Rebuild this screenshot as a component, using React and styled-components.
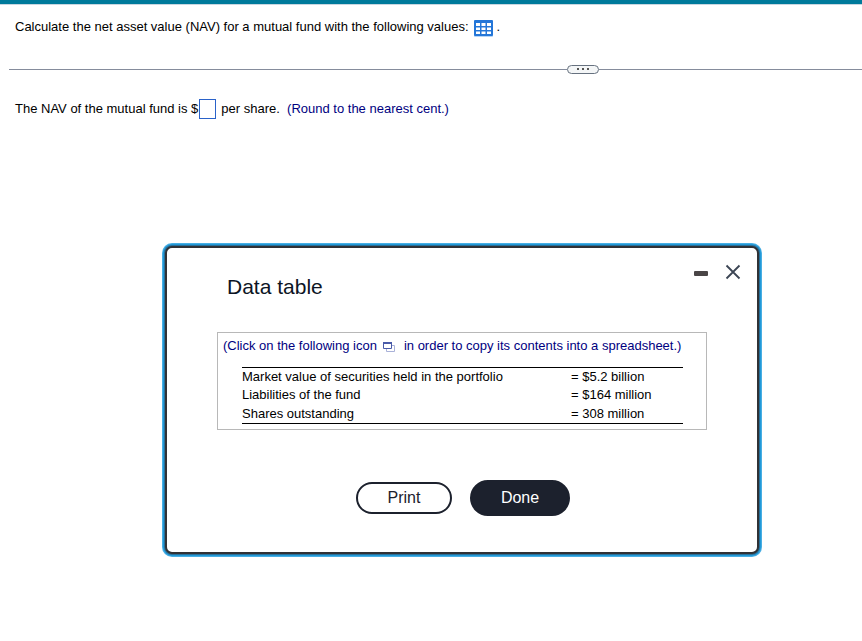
import React from "react";
import styled, { createGlobalStyle } from "styled-components";

const GlobalStyle = createGlobalStyle`
  *, *::before, *::after { box-sizing: border-box; }
  body {
    margin: 0;
    background: #fff;
    color: #000;
    font: 13px/18px "Liberation Sans", Arial, sans-serif;
  }
  button, input { font: inherit; }
`;

const Page = styled.main`
  position: relative;
  min-height: 100vh;
  border-top: 4px solid #007a9b;
`;

const Question = styled.section`
  display: flex;
  align-items: center;
  height: 44px;
  padding: 0 15px;
  border-top: 1px solid #c9d6e0;
  white-space: pre;
`;

const IconButton = styled.button`
  display: flex;
  align-items: center;
  justify-content: center;
  padding: 0;
  border: 0;
  background: none;
  color: #3c4554;
  cursor: pointer;
`;

const TableButton = styled(IconButton)`
  margin: 3px 4px 0 5px;
`;

const Divider = styled.div`
  display: grid;
  grid-template-columns: 558fr auto 263fr;
  align-items: center;
  height: 10px;
  margin: 16px 0 0 9px;
`;

const Rule = styled.span`
  height: 1px;
  background: #858c9c;
`;

const Handle = styled.button`
  display: flex;
  align-items: center;
  justify-content: center;
  gap: 3px;
  width: 32px;
  height: 9px;
  padding: 0;
  border: 1px solid #66717f;
  border-radius: 5px;
  background: #f4f6f7;
`;

const Dot = styled.span`
  width: 2px;
  height: 2px;
  background: #555;
`;

const Answer = styled.section`
  display: flex;
  align-items: center;
  height: 20px;
  margin-top: 25px;
  padding: 0 15px;
  white-space: pre;
`;

const AnswerInput = styled.input`
  width: 17px;
  height: 20px;
  margin: 0 5px 0 1px;
  padding: 0;
  border: 1px solid #2a62c9;
  outline: 0;
  background: #fff;
  text-align: center;
`;

const Hint = styled.span`
  color: #00007f;
`;

const Dialog = styled.section`
  position: absolute;
  top: 242px;
  left: 165px;
  right: 103px;
  min-width: 594px;
  padding: 0 50px 36px;
  border: 2px solid #303236;
  border-radius: 7px;
  background: #fff;
  box-shadow: 0 0 0 1px #286f98, 0 0 0 2px #2299d8, 0 0 0 3px #48aee3;
`;

const DialogHeader = styled.header`
  display: flex;
  justify-content: space-between;
  height: 84px;
  margin-right: -34px;
  padding-left: 10px;
`;

const Title = styled.h1`
  margin: 26px 0 0;
  color: #0c1424;
  font-size: 21px;
  line-height: 26px;
  font-weight: 400;
`;

const WindowActions = styled.div`
  display: flex;
  gap: 17px;
  height: 16px;
  margin-top: 16px;
`;

const DataPanel = styled.div`
  padding: 4px 23px 5px 24px;
  border: 1px solid #b8b8b8;
`;

const CopyNote = styled.p`
  display: flex;
  align-items: center;
  margin: 0 -19px;
  color: #00007f;
  white-space: pre;
`;

const CopyButton = styled(IconButton)`
  margin: 1px 9px 0 6px;
`;

const DataTable = styled.table`
  width: 100%;
  height: 57px;
  margin-top: 12px;
  border-collapse: separate;
  border-spacing: 0;
  border: solid #000;
  border-width: 1px 0;
`;

const Label = styled.th`
  padding: 0;
  font-weight: 400;
  text-align: left;
`;

const Value = styled.td`
  width: 112px;
  padding: 0;
`;

const Actions = styled.footer`
  display: flex;
  align-items: center;
  justify-content: center;
  gap: 18px;
  margin-top: 50px;
  padding-left: 2px;
`;

const PillButton = styled.button`
  width: ${(p) => (p.$primary ? 100 : 96)}px;
  height: ${(p) => (p.$primary ? 36 : 32)}px;
  padding: 0 0 1px;
  border: 2px solid #1c212d;
  border-radius: 18px;
  background: ${(p) => (p.$primary ? "#1c212d" : "#fff")};
  color: ${(p) => (p.$primary ? "#fff" : "#1c212d")};
  font-size: 16px;
  line-height: 20px;
  cursor: pointer;
`;

const rows = [
  ["Market value of securities held in the portfolio", "= $5.2 billion"],
  ["Liabilities of the fund", "= $164 million"],
  ["Shares outstanding", "= 308 million"],
];

const GridIcon = () => (
  <svg width="19" height="17" viewBox="0 0 19 17" aria-hidden="true">
    <rect y="1" width="19" height="16" rx="1" fill="#b5d5f7" />
    <rect width="19" height="16" rx="1" fill="#2476d8" />
    <path
      d="M2 3h4v3H2zM7.5 3h4v3h-4zM13 3h4v3h-4zM2 7.5h4v2.5H2zM7.5 7.5h4v2.5h-4zM13 7.5h4v2.5h-4zM2 11.5h4v2.5H2zM7.5 11.5h4v2.5h-4zM13 11.5h4v2.5h-4z"
      fill="#fff"
    />
  </svg>
);

const CopyIcon = () => (
  <svg width="12" height="10" viewBox="0 0 12 10" aria-hidden="true">
    <path d="M3.5 3.5h8v6h-8z" fill="#fff" stroke="#a9b1d8" />
    <path d="M.5 .5h8v6h-8z" fill="#fff" stroke="#4a5ba8" />
    <path d="M0 0h9v2H0z" fill="#4a5ba8" />
  </svg>
);

export default function App() {
  return (
    <>
      <GlobalStyle />
      <Page>
        <Question>
          Calculate the net asset value (NAV) for a mutual fund with the following values:
          <TableButton aria-label="Open data table"><GridIcon /></TableButton>
          .
        </Question>
        <Divider>
          <Rule />
          <Handle aria-label="Resize panels"><Dot /><Dot /><Dot /></Handle>
          <Rule />
        </Divider>
        <Answer>
          <label htmlFor="nav">The NAV of the mutual fund is $</label>
          <AnswerInput id="nav" type="text" />
          <span>{"per share.  "}</span>
          <Hint>(Round to the nearest cent.)</Hint>
        </Answer>

        <Dialog role="dialog" aria-labelledby="dialog-title">
          <DialogHeader>
            <Title id="dialog-title">Data table</Title>
            <WindowActions>
              <IconButton aria-label="Minimize">
                <svg width="14" height="16" viewBox="0 0 14 16" aria-hidden="true">
                  <rect y="7" width="14" height="5" rx="1" fill="#4a4546" />
                </svg>
              </IconButton>
              <IconButton aria-label="Close">
                <svg width="16" height="16" viewBox="0 0 16 16" fill="none" stroke="currentColor" strokeWidth="1.8" aria-hidden="true">
                  <path d="M1.5 1.5l13 13M14.5 1.5l-13 13" />
                </svg>
              </IconButton>
            </WindowActions>
          </DialogHeader>
          <DataPanel>
            <CopyNote>
              (Click on the following icon
              <CopyButton aria-label="Copy to spreadsheet"><CopyIcon /></CopyButton>
              in order to copy its contents into a spreadsheet.)
            </CopyNote>
            <DataTable>
              <tbody>
                {rows.map(([label, value]) => (
                  <tr key={label}>
                    <Label scope="row">{label}</Label>
                    <Value>{value}</Value>
                  </tr>
                ))}
              </tbody>
            </DataTable>
          </DataPanel>
          <Actions>
            <PillButton>Print</PillButton>
            <PillButton $primary>Done</PillButton>
          </Actions>
        </Dialog>
      </Page>
    </>
  );
}
